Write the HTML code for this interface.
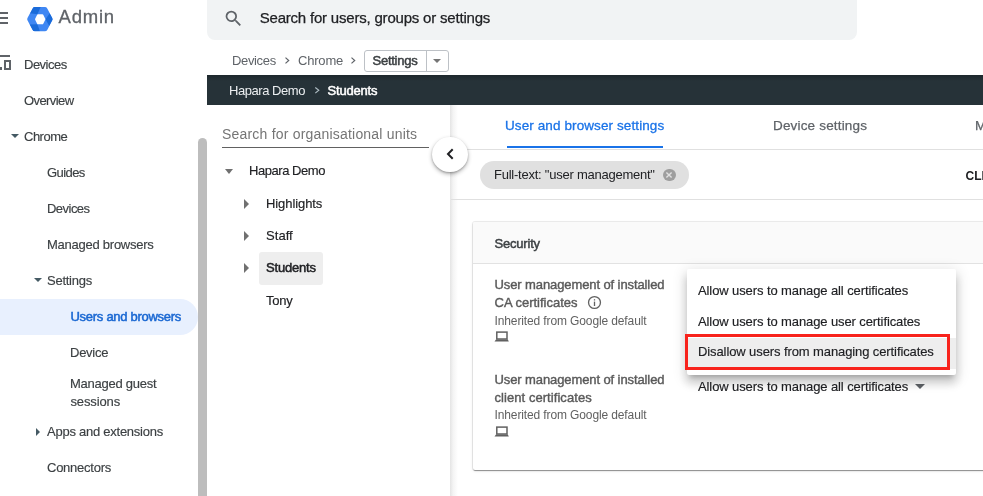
<!DOCTYPE html>
<html><head><meta charset="utf-8">
<style>
html,body{margin:0;padding:0;}
body{width:983px;height:496px;overflow:hidden;position:relative;background:#fff;font-family:"Liberation Sans",sans-serif;color:#3c4043;}
.a{position:absolute;white-space:nowrap;line-height:1;}
.nav{font-size:13px;color:#3c4043;letter-spacing:-0.25px;-webkit-text-stroke:0.150px #3c4043;}
.tree{font-size:13px;color:#202124;letter-spacing:-0.25px;-webkit-text-stroke:0.150px #202124;}
#w{position:absolute;left:0;top:0;width:983px;height:496px;will-change:transform;}
</style></head><body><div id="w">
<!-- hamburger -->
<div class="a" style="left:0;top:12px;width:8px;height:2px;background:#5f6368"></div>
<div class="a" style="left:0;top:17px;width:8px;height:2px;background:#5f6368"></div>
<div class="a" style="left:0;top:22px;width:8px;height:2px;background:#5f6368"></div>
<!-- logo -->
<svg class="a" style="left:26px;top:6px" width="28" height="27" viewBox="0 0 28 27"><defs><clipPath id="hx"><path d="M1.60 14.61 Q0.85 13.20 1.60 11.79 L6.55 2.51 Q7.30 1.10 8.90 1.10 L18.90 1.10 Q20.50 1.10 21.25 2.51 L26.20 11.79 Q26.95 13.20 26.20 14.61 L21.25 23.89 Q20.50 25.30 18.90 25.30 L8.90 25.30 Q7.30 25.30 6.55 23.89 Z"/></clipPath></defs><g clip-path="url(#hx)"><rect width="28" height="27" fill="#3f87f3"/><polygon points="7.30,1.10 14.69,1.10 11.40,8.20 4.07,7.15" fill="#1a6bd9"/><polygon points="26.95,13.20 23.34,19.98 19.50,13.20 23.73,7.15" fill="#1a6bd9"/><polygon points="7.30,25.30 3.69,18.52 11.40,18.20 13.90,25.30" fill="#1a6bd9"/></g><path d="M9.17 13.74 Q8.90 13.20 9.17 12.66 L11.13 8.74 Q11.40 8.20 12.00 8.20 L16.40 8.20 Q17.00 8.20 17.27 8.74 L19.23 12.66 Q19.50 13.20 19.23 13.74 L17.27 17.66 Q17.00 18.20 16.40 18.20 L12.00 18.20 Q11.40 18.20 11.13 17.66 Z" fill="#fff"/></svg>
<div class="a" style="left:58.500px;top:8.100px;font-size:18.500px;color:#5f6368;letter-spacing:0.8px;-webkit-text-stroke:0.300px #5f6368;">Admin</div>
<!-- search bar -->
<div class="a" style="left:207px;top:0;width:650px;height:40px;background:#f1f3f4;border-radius:0 0 8px 8px;"></div>
<svg class="a" style="left:223.300px;top:7.800px" width="21" height="21" viewBox="0 0 24 24"><path fill="#5f6368" d="M15.5 14h-.79l-.28-.27A6.471 6.471 0 0 0 16 9.5 6.5 6.5 0 1 0 9.5 16c1.610 0 3.090-.590 4.230-1.570l.27.28v.79l5 4.990L20.490 19l-4.990-5zm-6 0C7.010 14 5 11.990 5 9.500S7.010 5 9.500 5 14 7.010 14 9.500 11.990 14 9.500 14z"/></svg>
<div class="a" style="left:259.700px;top:10px;font-size:15px;color:#202124;letter-spacing:-0.2px;-webkit-text-stroke:0.250px #202124;">Search for users, groups or settings</div>
<!-- breadcrumb -->
<div class="a" style="left:232px;top:54px;font-size:13px;color:#5f6368;letter-spacing:-0.35px;">Devices</div>
<svg class="a" style="left:284px;top:56.300px" width="7" height="9" viewBox="0 0 7 9"><path d="M1.500 1.600 L4.700 4.500 L1.500 7.400" fill="none" stroke="#5f6368" stroke-width="1.200"/></svg>
<div class="a" style="left:298px;top:54px;font-size:13px;color:#5f6368;letter-spacing:-0.2px;">Chrome</div>
<svg class="a" style="left:349.500px;top:56.300px" width="7" height="9" viewBox="0 0 7 9"><path d="M1.500 1.600 L4.700 4.500 L1.500 7.400" fill="none" stroke="#5f6368" stroke-width="1.200"/></svg>
<div class="a" style="left:364px;top:50px;width:83px;height:20px;border:1px solid #bdc1c6;border-radius:3px;box-sizing:content-box;"></div>
<div class="a" style="left:426px;top:51px;width:1px;height:20px;background:#bdc1c6;"></div>
<div class="a" style="left:372.500px;top:54px;font-size:13px;color:#3c4043;letter-spacing:-0.25px;-webkit-text-stroke:0.500px #3c4043;">Settings</div>
<div class="a" style="left:433px;top:59px;width:0;height:0;border-left:4.500px solid transparent;border-right:4.500px solid transparent;border-top:4.500px solid #757575;"></div>
<!-- dark bar -->
<div class="a" style="left:207px;top:75px;width:776px;height:30px;background:linear-gradient(#1d272c,#263238 20%);"></div>
<div class="a" style="left:229px;top:84px;font-size:13px;color:#eceff1;letter-spacing:-0.45px;">Hapara Demo</div>
<svg class="a" style="left:313.500px;top:86px" width="7" height="9" viewBox="0 0 7 9"><path d="M1.300 1.500 L4.800 4.300 L1.300 7.100" fill="none" stroke="#b0bec5" stroke-width="1.100"/></svg>
<div class="a" style="left:327.500px;top:84px;font-size:13px;color:#fff;letter-spacing:-0.2px;-webkit-text-stroke:0.500px #fff;">Students</div>

<!-- sidebar nav -->
<div class="a" style="left:0;top:55px;width:10px;height:2px;background:#5f6368"></div>
<div class="a" style="left:3.500px;top:59.500px;width:3.500px;height:6.500px;border:2px solid #5f6368;"></div>
<div class="a" style="left:0;top:67px;width:1.500px;height:3px;background:#5f6368"></div>
<div class="a nav" style="left:24px;top:58px;letter-spacing:-0.5px;">Devices</div>
<div class="a nav" style="left:24px;top:94px;letter-spacing:-0.58px;">Overview</div>
<div class="a" style="left:11px;top:134px;width:0;height:0;border-left:4px solid transparent;border-right:4px solid transparent;border-top:4px solid #455a64;"></div>
<div class="a nav" style="left:24px;top:130px;letter-spacing:-0.5px;">Chrome</div>
<div class="a nav" style="left:47px;top:166px;letter-spacing:-0.58px;">Guides</div>
<div class="a nav" style="left:47px;top:202px;letter-spacing:-0.53px;">Devices</div>
<div class="a nav" style="left:47px;top:238px;">Managed browsers</div>
<div class="a" style="left:34px;top:278px;width:0;height:0;border-left:4px solid transparent;border-right:4px solid transparent;border-top:4px solid #455a64;"></div>
<div class="a nav" style="left:47px;top:274px;">Settings</div>
<div class="a" style="left:0;top:299px;width:198px;height:36px;background:#e8f0fe;border-radius:0 18px 18px 0;"></div>
<div class="a nav" style="left:70.500px;top:309.500px;color:#1967d2;font-size:13px;letter-spacing:-0.28px;-webkit-text-stroke:0.500px #1967d2;">Users and browsers</div>
<div class="a nav" style="left:70px;top:346px;">Device</div>
<div class="a nav" style="left:70px;top:377px;">Managed guest</div>
<div class="a nav" style="left:70.500px;top:395px;letter-spacing:-0.13px;">sessions</div>
<div class="a" style="left:36px;top:428px;width:0;height:0;border-top:4px solid transparent;border-bottom:4px solid transparent;border-left:4px solid #455a64;"></div>
<div class="a nav" style="left:47px;top:425px;">Apps and extensions</div>
<div class="a nav" style="left:47px;top:461px;">Connectors</div>
<!-- scrollbar -->
<div class="a" style="left:198px;top:138px;width:9px;height:370px;background:#bdbdbd;border-radius:5px 5px 0 0;"></div>

<!-- OU panel -->
<div class="a" style="left:450px;top:105px;width:8px;height:391px;background:linear-gradient(to right,#e4e4e4,#f4f4f4 40%,#fff);"></div>
<div class="a" style="left:222px;top:127px;font-size:14px;color:#757575;letter-spacing:0.2px;">Search for organisational units</div>
<div class="a" style="left:222px;top:147px;width:207px;height:1px;background:#616161;"></div>
<div class="a" style="left:224.500px;top:168.800px;width:0;height:0;border-left:4.700px solid transparent;border-right:4.700px solid transparent;border-top:5.400px solid #707070;"></div>
<div class="a tree" style="left:249px;top:164px;letter-spacing:-0.45px;">Hapara Demo</div>
<div class="a" style="left:244px;top:199.100px;width:0;height:0;border-top:5.200px solid transparent;border-bottom:5.200px solid transparent;border-left:5.700px solid #707070;"></div>
<div class="a tree" style="left:266px;top:197px;letter-spacing:-0.08px;">Highlights</div>
<div class="a" style="left:244px;top:231.300px;width:0;height:0;border-top:5.200px solid transparent;border-bottom:5.200px solid transparent;border-left:5.700px solid #707070;"></div>
<div class="a tree" style="left:266px;top:229px;letter-spacing:0.05px;">Staff</div>
<div class="a" style="left:259px;top:252px;width:64px;height:33px;background:#eeeeee;border-radius:3px;"></div>
<div class="a" style="left:244px;top:263.300px;width:0;height:0;border-top:5.200px solid transparent;border-bottom:5.200px solid transparent;border-left:5.700px solid #707070;"></div>
<div class="a tree" style="left:266px;top:261px;letter-spacing:-0.2px;-webkit-text-stroke:0.500px #202124;">Students</div>
<div class="a tree" style="left:266px;top:294px;">Tony</div>
<!-- collapse button -->
<div class="a" style="left:432px;top:136.500px;width:35.500px;height:35.500px;border-radius:50%;background:#fff;z-index:5;box-shadow:0 2px 4px rgba(0,0,0,0.3),0 1px 2px rgba(0,0,0,0.2);"></div>
<svg class="a" style="left:444px;top:146.600px;z-index:6" width="12" height="14" viewBox="0 0 12 14"><path d="M8.700 2.300 L4 7 L8.700 11.700" fill="none" stroke="#202124" stroke-width="2"/></svg>

<!-- tabs -->
<div class="a" style="left:505px;top:119px;font-size:13.500px;color:#1a73e8;letter-spacing:0.1px;-webkit-text-stroke:0.300px #1a73e8;">User and browser settings</div>
<div class="a" style="left:507px;top:145.700px;width:155.500px;height:2.200px;background:#1a73e8;"></div>
<div class="a" style="left:773px;top:119px;font-size:13.500px;color:#5f6368;letter-spacing:0.17px;-webkit-text-stroke:0.250px #5f6368;">Device settings</div>
<div class="a" style="left:975px;top:119px;font-size:13.500px;color:#5f6368;-webkit-text-stroke:0.250px #5f6368;">M</div>
<div class="a" style="left:451px;top:149px;width:532px;height:1px;background:#e0e0e0;"></div>
<!-- chip -->
<div class="a" style="left:480px;top:161px;width:209px;height:28px;background:#e0e0e0;border-radius:14px;"></div>
<div class="a" style="left:494px;top:168px;font-size:13px;color:#202124;letter-spacing:-0.24px;">Full-text: "user management"</div>
<div class="a" style="left:663px;top:168.500px;width:12.500px;height:12.500px;border-radius:50%;background:#9e9e9e;"></div>
<svg class="a" style="left:663.250px;top:168.750px" width="12" height="12" viewBox="0 0 12 12"><path d="M3.400 3.400 L8.600 8.600 M8.600 3.400 L3.400 8.600" stroke="#e0e0e0" stroke-width="1.400"/></svg>
<div class="a" style="left:965.500px;top:169.500px;font-size:12px;font-weight:bold;color:#202124;">CLEAR</div>
<div class="a" style="left:451px;top:199px;width:532px;height:1px;background:#e0e0e0;"></div>

<!-- card -->
<div class="a" style="left:473px;top:221.500px;width:520px;height:248px;border-radius:2px;box-shadow:0 0 0 1px rgba(0,0,0,.07),0 2px 1px -1px rgba(0,0,0,.25),0 1px 1px 0 rgba(0,0,0,.14),0 1px 3px 0 rgba(0,0,0,.12);background:#fff;"></div>
<div class="a" style="left:473px;top:221.500px;width:510px;height:41.500px;background:#fafafa;border-radius:2px 0 0 0;"></div><div class="a" style="left:473px;top:263px;width:510px;height:1px;background:#e2e2e2;"></div>
<div class="a" style="left:494.500px;top:236.800px;font-size:13px;color:#3c4043;letter-spacing:-0.2px;-webkit-text-stroke:0.450px #3c4043;">Security</div>

<div class="a" style="left:494.500px;top:277.700px;font-size:13px;color:#5a5a5a;letter-spacing:-0.1px;-webkit-text-stroke:0.400px #5a5a5a;">User management of installed</div>
<div class="a" style="left:494.500px;top:295.700px;font-size:13px;color:#5a5a5a;letter-spacing:0px;-webkit-text-stroke:0.400px #5a5a5a;">CA certificates</div>
<svg class="a" style="left:586.600px;top:294.500px" width="15" height="15" viewBox="0 0 15 15"><circle cx="7.500" cy="7.500" r="5.950" fill="none" stroke="#616161" stroke-width="1.300"/><rect x="6.850" y="6.600" width="1.300" height="4.400" fill="#616161"/><rect x="6.850" y="4.200" width="1.300" height="1.300" fill="#616161"/></svg>
<div class="a" style="left:494.500px;top:315px;font-size:12px;color:#616161;letter-spacing:-0.12px;">Inherited from Google default</div>
<svg class="a" style="left:494px;top:331px" width="16" height="11" viewBox="0 0 16 11"><rect x="2.800" y="1.100" width="10.200" height="6.900" fill="none" stroke="#616161" stroke-width="1.500"/><polygon points="2,8.600 13.800,8.600 14.800,10.600 0.500,10.600" fill="#616161"/></svg>

<div class="a" style="left:494.500px;top:372.700px;font-size:13px;color:#5a5a5a;letter-spacing:-0.1px;-webkit-text-stroke:0.400px #5a5a5a;">User management of installed</div>
<div class="a" style="left:494.500px;top:390.700px;font-size:13px;color:#5a5a5a;letter-spacing:0.06px;-webkit-text-stroke:0.400px #5a5a5a;">client certificates</div>
<div class="a" style="left:494.500px;top:409px;font-size:12px;color:#616161;letter-spacing:-0.12px;">Inherited from Google default</div>
<svg class="a" style="left:494px;top:425.500px" width="16" height="11" viewBox="0 0 16 11"><rect x="2.800" y="1.100" width="10.200" height="6.900" fill="none" stroke="#616161" stroke-width="1.500"/><polygon points="2,8.600 13.800,8.600 14.800,10.600 0.500,10.600" fill="#616161"/></svg>

<div class="a" style="left:698px;top:380px;font-size:13px;color:#202124;letter-spacing:-0.1px;-webkit-text-stroke:0.150px #202124;">Allow users to manage all certificates</div>
<div class="a" style="left:915px;top:384px;width:0;height:0;border-left:5px solid transparent;border-right:5px solid transparent;border-top:5px solid #5f6368;"></div>

<!-- dropdown -->
<div class="a" style="left:687px;top:269px;width:269px;height:105.500px;background:#fff;border-radius:2px;box-shadow:0 5px 5px -3px rgba(0,0,0,.2),0 8px 10px 1px rgba(0,0,0,.14),0 3px 14px 2px rgba(0,0,0,.12);"></div>
<div class="a" style="left:687px;top:337.500px;width:269px;height:31.500px;background:#eeeeee;"></div>
<div class="a" style="left:698px;top:284px;font-size:13px;color:#202124;letter-spacing:-0.1px;-webkit-text-stroke:0.150px #202124;">Allow users to manage all certificates</div>
<div class="a" style="left:698px;top:315px;font-size:13px;color:#202124;letter-spacing:-0.1px;-webkit-text-stroke:0.150px #202124;">Allow users to manage user certificates</div>
<div class="a" style="left:698px;top:345px;font-size:13px;color:#202124;letter-spacing:-0.1px;-webkit-text-stroke:0.150px #202124;">Disallow users from managing certificates</div>
<div class="a" style="left:685px;top:334px;width:258.500px;height:30px;border:3px solid #f8231c;box-sizing:content-box;"></div>
</div></body></html>
